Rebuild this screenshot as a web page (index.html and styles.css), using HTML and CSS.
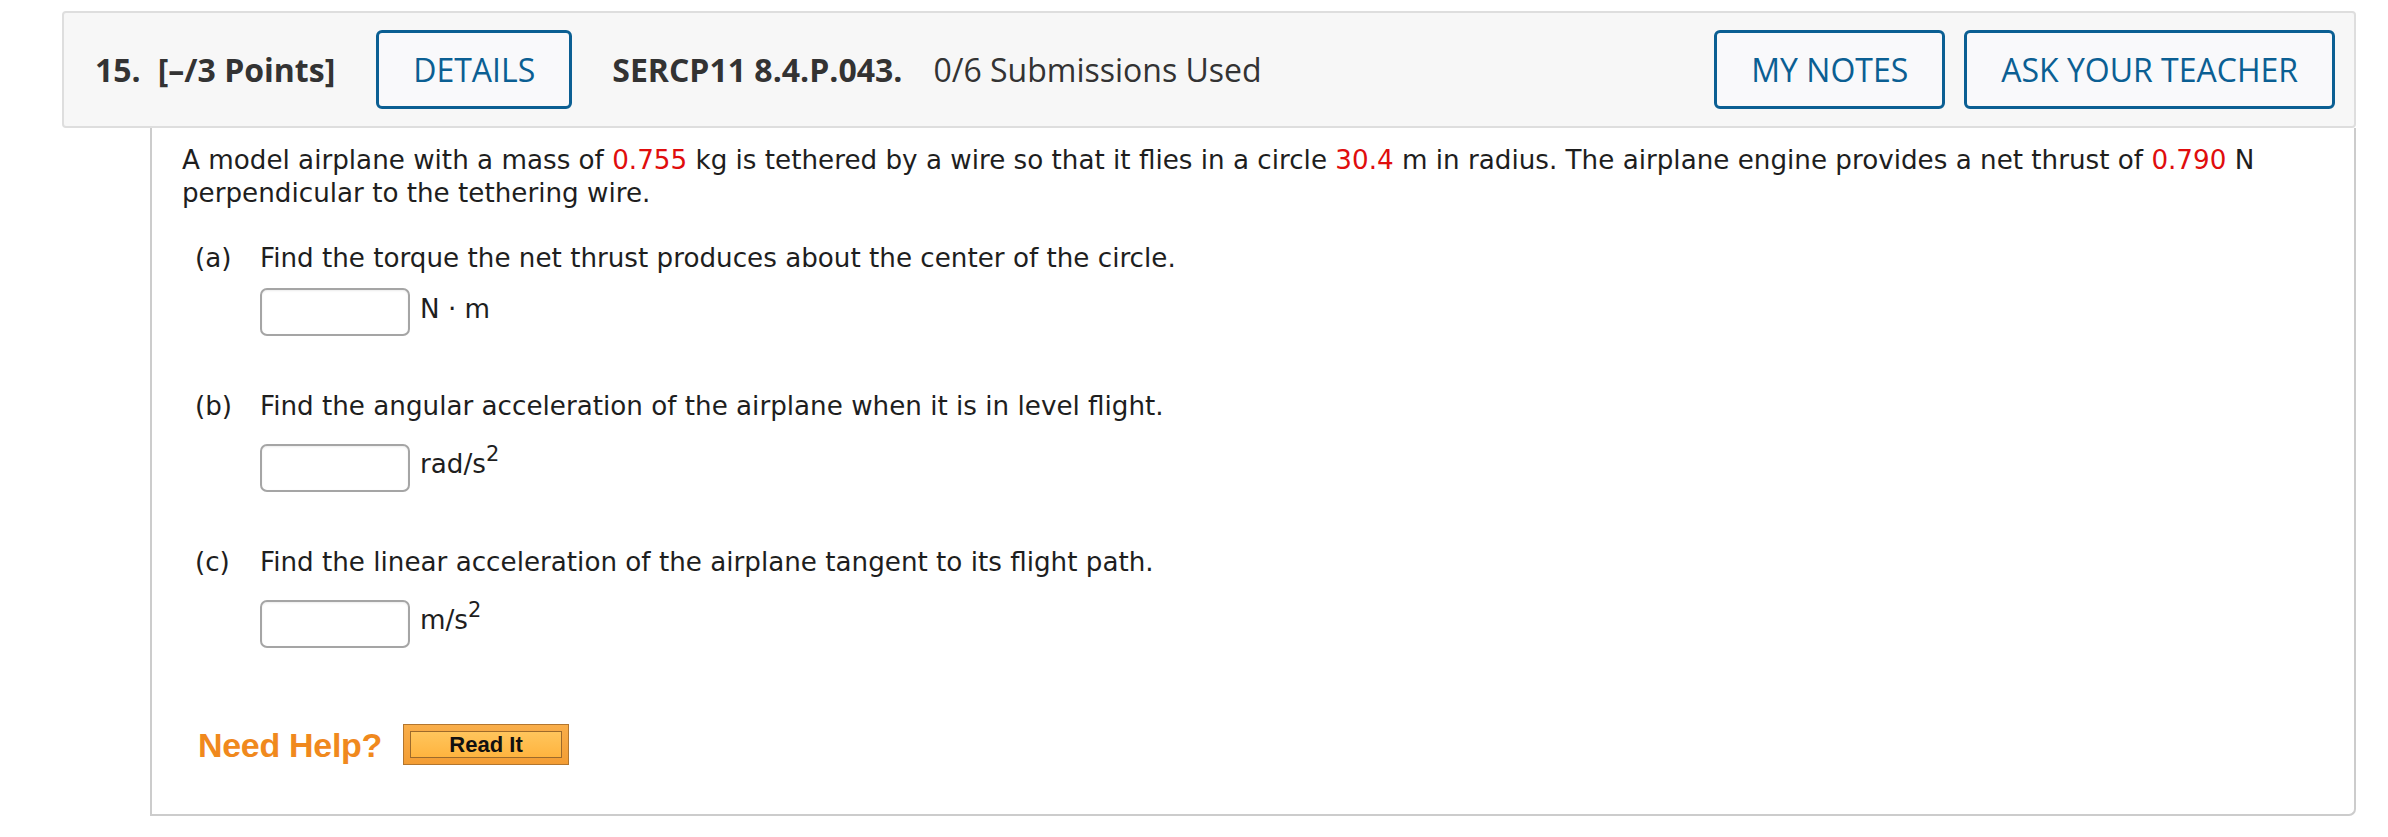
FILE: index.html
```html
<!DOCTYPE html>
<html lang="en">
<head>
<meta charset="utf-8">
<title>Question 15</title>
<link rel="stylesheet" href="styles.css">
</head>
<body>
<div class="question">
  <div class="q-header">
    <span class="q-num">15.</span>
    <span class="q-points">[–/3 Points]</span>
    <button class="btn btn-details">DETAILS</button>
    <span class="q-code">SERCP11 8.4.P.043.</span>
    <span class="q-subs">0/6 Submissions Used</span>
    <span class="spacer"></span>
    <button class="btn">MY NOTES</button>
    <button class="btn">ASK YOUR TEACHER</button>
  </div>
  <div class="q-body">
    <p class="prompt">A model airplane with a mass of <span class="val">0.755</span> kg is tethered by a wire so that it flies in a circle <span class="val">30.4</span> m in radius. The airplane engine provides a net thrust of <span class="val">0.790</span> N perpendicular to the tethering wire.</p>

    <div class="part">
      <div class="part-q"><span class="part-label">(a)</span><span>Find the torque the net thrust produces about the center of the circle.</span></div>
      <div class="answer-row">
        <input class="answer" type="text">
        <span class="unit">N · m</span>
      </div>
    </div>

    <div class="part">
      <div class="part-q"><span class="part-label">(b)</span><span>Find the angular acceleration of the airplane when it is in level flight.</span></div>
      <div class="answer-row answer-row-sup">
        <input class="answer" type="text">
        <span class="unit">rad/s<sup>2</sup></span>
      </div>
    </div>

    <div class="part">
      <div class="part-q"><span class="part-label">(c)</span><span>Find the linear acceleration of the airplane tangent to its flight path.</span></div>
      <div class="answer-row answer-row-sup">
        <input class="answer" type="text">
        <span class="unit">m/s<sup>2</sup></span>
      </div>
    </div>

    <div class="help">
      <span class="need-help">Need Help?</span>
      <button class="read-it"><span class="read-it-inner">Read It</span></button>
    </div>
  </div>
</div>
</body>
</html>
```

FILE: styles.css
```css
html, body {
  margin: 0;
  padding: 0;
  background: #ffffff;
}

body {
  font-family: "DejaVu Sans", Verdana, sans-serif;
  color: #1e1e1e;
}

.question {
  margin: 11px 0 0 62px;
  width: 2294px;
}

.q-header {
  display: flex;
  align-items: center;
  height: 117px;
  box-sizing: border-box;
  padding: 0 19px 0 31px;
  background: #f7f7f7;
  border: 2px solid #dedede;
  border-radius: 4px;
  font-family: "Open Sans", sans-serif;
  font-size: 32px;
  color: #333333;
}

.q-num {
  font-weight: 700;
  margin-right: 17px;
}

.q-points {
  font-weight: 700;
  margin-right: 41px;
}

.btn {
  height: 79px;
  box-sizing: border-box;
  padding: 0 34px;
  border: 3px solid #0b5f93;
  border-radius: 6px;
  background: #f9f9fb;
  color: #0b5f93;
  font-family: "Open Sans", sans-serif;
  font-size: 32px;
  font-weight: 400;
  line-height: 1;
  margin-left: 19px;
}

.btn-details {
  margin-left: 0;
  margin-right: 40px;
}

.q-code {
  font-weight: 700;
}

.q-subs {
  margin-left: 31px;
}

.spacer {
  flex: 1;
}

.q-body {
  margin-left: 88px;
  height: 688px;
  box-sizing: border-box;
  padding: 16px 12px 0 30px;
  border: 2px solid #cccccc;
  border-top: none;
  border-radius: 0 0 7px 0;
  font-size: 26.2px;
  line-height: 33px;
}

.prompt {
  margin: 0;
}

.val {
  color: #e00d0d;
}

.part {
  margin-top: 32px;
  padding-left: 13px;
}

.part + .part {
  margin-top: 54px;
}

.part-q {
  display: flex;
}

.part-label {
  width: 65px;
  flex: none;
}

.answer-row {
  display: flex;
  align-items: center;
  margin-top: 13px;
  margin-left: 65px;
}

.answer-row-sup {
  margin-top: 21px;
}

.answer {
  width: 150px;
  height: 48px;
  box-sizing: border-box;
  margin: 0;
  border: 2px solid #a5a5a5;
  border-radius: 7px;
  background: #ffffff;
  box-shadow: inset 0 1px 2px rgba(0, 0, 0, 0.08);
}

.unit {
  margin-left: 10px;
  line-height: 33px;
  position: relative;
  top: -3px;
}

.answer-row-sup .unit {
  top: -4px;
}

.unit sup {
  font-size: 0.8em;
  line-height: 0;
  position: relative;
  top: -2px;
}

.help {
  display: flex;
  align-items: center;
  margin-top: 76px;
  padding-left: 16px;
}

.need-help {
  font-family: "Liberation Sans", Arial, sans-serif;
  font-size: 34px;
  font-weight: 700;
  color: #f0891d;
  letter-spacing: -0.3px;
  line-height: 1;
}

.read-it {
  margin: 0 0 0 21px;
  width: 166px;
  height: 41px;
  box-sizing: border-box;
  padding: 6px;
  border: 1px solid #b3762e;
  background: linear-gradient(#f9ae4a, #f39d34);
  cursor: pointer;
}

.read-it-inner {
  display: block;
  height: 100%;
  box-sizing: border-box;
  border: 1px solid #9d6a2b;
  background: linear-gradient(#ffc55c, #ffb43f);
  font-family: "Liberation Sans", Arial, sans-serif;
  font-size: 22px;
  font-weight: 700;
  line-height: 25px;
  color: #111111;
}
```
